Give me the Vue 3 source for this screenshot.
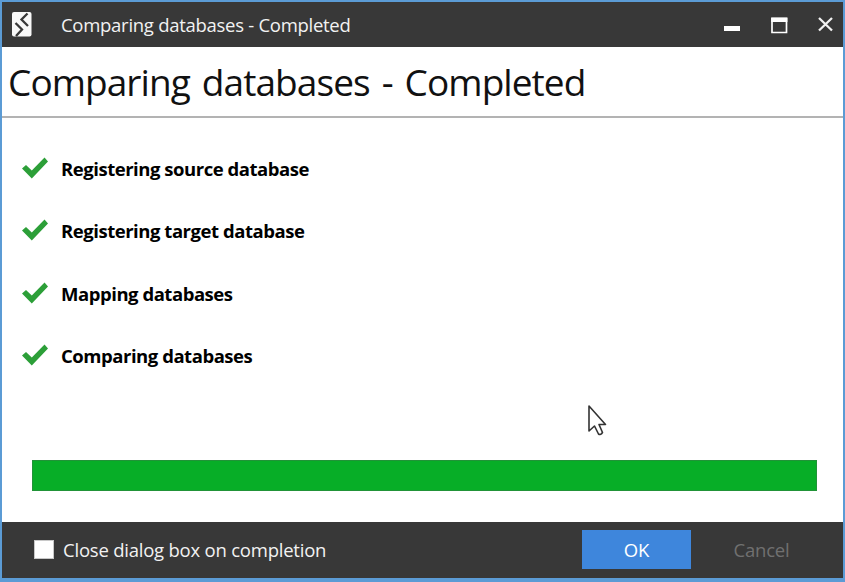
<template>
  <div class="dialog">
    <header class="title-bar">
      <svg class="logo" width="21" height="27" viewBox="0 0 21 27">
        <path d="M3 1h15.500q2 0 2 2v20.500q0 2-2 2H3q-2 0-2-2V3q0-2 2-2z" fill="#f8f8f8" />
        <path d="M16.500 2.500L10.500 8.500L17 15M4.500 12L11 18.500L5 25" fill="none" stroke="#383838" stroke-width="2.300" />
      </svg>
      <span class="caption">{{ title }}</span>
      <div class="window-buttons">
        <svg width="110" height="20" viewBox="0 0 110 20">
          <rect x="0" y="11" width="16" height="5" fill="#fff" />
          <path d="M48 3.500h14.500v14h-14.500z" fill="none" stroke="#fff" stroke-width="1.700" />
          <rect x="47.200" y="2.500" width="16.200" height="4.500" fill="#fff" />
          <path d="M95 3L108 15.500M108 3L95 15.500" stroke="#f2f2f2" stroke-width="2.300" />
        </svg>
      </div>
    </header>

    <h1 class="heading">{{ title }}</h1>

    <main class="content">
      <ul class="steps">
        <li v-for="step in steps" :key="step">
          <svg class="check" width="28" height="24" viewBox="0 0 28 24">
            <path d="M1 12.500L5 9L10.800 14.500L23.500 1.500L27 5.500L10.800 22.500z" fill="#2c9f38" />
          </svg>
          <span>{{ step }}</span>
        </li>
      </ul>
      <div class="progress">
        <div class="progress-bar" :style="{ width: progress + '%' }"></div>
      </div>
    </main>

    <footer class="actions">
      <label class="auto-close">
        <input v-model="autoClose" type="checkbox">
        <span>Close dialog box on completion</span>
      </label>
      <button class="btn btn-ok">OK</button>
      <button class="btn btn-cancel" disabled>Cancel</button>
    </footer>

    <svg class="cursor" width="22" height="34" viewBox="0 0 22 34">
      <path d="M2 2V27L7.500 22L11.500 30Q13.500 31.500 15.500 28.500L12 20.500H18.500z" fill="#fff" stroke="#333" stroke-width="1.600" stroke-linejoin="round" />
    </svg>
  </div>
</template>

<script setup>
import { ref } from 'vue';

const title = 'Comparing databases - Completed';

const steps = [
  'Registering source database',
  'Registering target database',
  'Mapping databases',
  'Comparing databases'
];

const progress = ref(100);
const autoClose = ref(false);
</script>

<style>
body { margin: 0; }
</style>

<style scoped>
.dialog { position: relative; box-sizing: border-box; width: 845px; height: 582px; border: 2px solid #5b9bd5; border-bottom-width: 4px; background: #fff; display: flex; flex-direction: column; overflow: hidden; font-family: "Open Sans", "Noto Sans", sans-serif; color: #111; white-space: nowrap; }

/* Barra de titulo */
.title-bar { height: 45px; flex: none; display: flex; align-items: center; background: #383838; color: #f2f2f2; }
.logo { margin-left: 9px; margin-top: -1px; }
.caption { margin-left: 29px; font-size: 18.5px; letter-spacing: -0.28px; }
.window-buttons { margin-left: auto; margin-right: 9px; height: 20px; }
.window-buttons svg { display: block; }

.heading { box-sizing: border-box; height: 71px; flex: none; margin: 0; padding-left: 6px; border-bottom: 2px solid #b3b3b3; font-size: 37px; font-weight: 400; line-height: 69px; letter-spacing: -0.93px; word-spacing: 3.3px; }

/* Pasos */
.content { flex: 1; display: flex; flex-direction: column; padding: 19px 26.5px 31px 30px; }
.steps { list-style: none; margin: 0 0 0 -11px; padding: 0; }
.steps li { height: 62.5px; display: flex; align-items: center; gap: 12px; font-size: 18.5px; font-weight: 700; color: #000; letter-spacing: -0.46px; }
.check { flex: none; margin-top: -1px; }
.progress { height: 31px; margin-top: auto; }
.progress-bar { height: 100%; background: #07ae27; box-shadow: inset 0 0 0 1px #219338; }

/* Pie */
.actions { box-sizing: border-box; height: 56px; flex: none; display: flex; align-items: center; padding-bottom: 2px; background: #383838; }
.auto-close { display: flex; align-items: center; gap: 9px; margin-left: 32px; color: #f2f2f2; font-size: 18.5px; letter-spacing: -0.22px; }
.auto-close input { appearance: none; width: 20px; height: 19px; margin: 0; background: #fff; border: 1px solid #c8c8c8; }
.btn { border: none; padding: 0; font: inherit; font-size: 18.5px; letter-spacing: -0.2px; }
.btn-ok { width: 109px; height: 39px; margin-left: auto; background: #3e86dc; color: #fff; }
.btn-cancel { width: 109px; height: 39px; margin: 0 27px 0 16px; background: transparent; color: #707070; }

.cursor { position: absolute; left: 585px; top: 402px; }
</style>
